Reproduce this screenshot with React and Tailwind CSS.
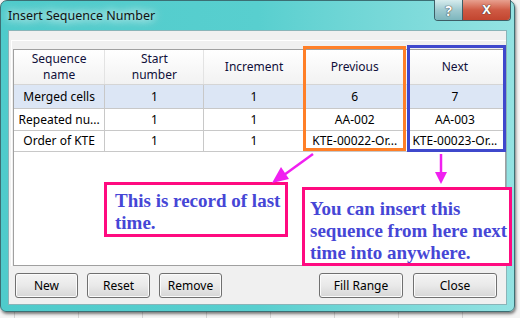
import React from 'react';

const rows = [
  { name: 'Merged cells', start: '1', inc: '1', prev: '6', next: '7', selected: true },
  { name: 'Repeated nu...', start: '1', inc: '1', prev: 'AA-002', next: 'AA-003' },
  { name: 'Order of KTE', start: '1', inc: '1', prev: 'KTE-00022-Or...', next: 'KTE-00023-Or...' },
];

const cols = ['w-[92px]', 'w-[100px]', 'w-[101px]', 'w-[102px]', 'w-[100px]'];
const rowHeights = ['h-[24px]', 'h-[22px]', 'h-[21px]'];

function Btn({ label, w }) {
  return (
    <button
      className={`${w} h-[25px] rounded-[3px] border border-[#707070] bg-gradient-to-b from-[#f4f4f4] via-[#e9e9e9] to-[#d6d6d6] text-[12px] text-black shadow-[inset_0_0_0_1px_#fbfbfb]`}
    >
      {label}
    </button>
  );
}

function Callout({ className, children }) {
  return (
    <div
      className={`absolute border-[3px] border-[#ff0a80] bg-white font-['Liberation_Serif',serif] text-[19px] font-bold leading-[22px] text-[#4646d6] ${className}`}
    >
      {children}
    </div>
  );
}

export default function App() {
  return (
    <div className="relative h-[318px] w-[520px] overflow-hidden bg-[#f4f4f4] font-['Noto_Sans',sans-serif]">
      {/* window */}
      <div className="relative h-[312px] w-[515px] rounded-t-[7px] rounded-b-[6px] border border-[#3c6f74] bg-gradient-to-r from-[#4fcbcb] via-[#58cfcf] to-[#93e2e2] px-[7px] pb-[6px] pt-[29px] shadow-[1px_2px_3px_rgba(0,0,0,0.5)]">
        {/* title */}
        <div className="absolute left-[7px] top-[6px] text-[12.5px] text-[#111] [text-shadow:0_0_8px_#fff,0_0_12px_#fff]">
          Insert Sequence Number
        </div>
        <div className="absolute right-[3px] top-[-1px] flex h-[21px] overflow-hidden rounded-b-[4px] border border-t-0 border-[#3d5e66]">
          <div className="flex w-[28px] items-center justify-center border-r border-[#3d5e66] bg-gradient-to-b from-[#d6ecee] via-[#9fcad0] to-[#7cb6bd] text-[14px] font-bold text-white [text-shadow:0_0_1px_#333,0_0_1px_#333]">
            ?
          </div>
          <div className="flex w-[47px] items-center justify-center bg-gradient-to-b from-[#e7a08f] via-[#cf5a44] to-[#c2452f] text-[13px] font-bold text-white [text-shadow:0_0_1px_#333,0_0_1px_#333]">
            X
          </div>
        </div>

        {/* client area */}
        <div className="flex h-full flex-col border border-[#8ab4b8] bg-[#f0f0f0] pl-[2px] pr-0 pt-[9px]">
          <div className="flex h-[226px] flex-col border-t border-l border-white pl-px pt-[8px]">
            <div className="flex-1 border border-[#a0a0a0] bg-white">
              {/* header */}
              <div className="flex h-[35px] border-b border-[#d5d5d5] bg-gradient-to-b from-white to-[#f2f2f2] text-[12px] leading-[16px] text-[#10103a]">
                {['Sequence name', 'Start number', 'Increment', 'Previous', 'Next'].map((h, i) => (
                  <div
                    key={h}
                    className={`${cols[i]} flex flex-col items-center justify-center border-r border-[#e3e3e3] px-1 text-center`}
                  >
                    {h === 'Sequence name' ? (
                      <>
                        <span>Sequence</span>
                        <span>name</span>
                      </>
                    ) : h === 'Start number' ? (
                      <>
                        <span>Start</span>
                        <span>number</span>
                      </>
                    ) : (
                      <span>{h}</span>
                    )}
                  </div>
                ))}
              </div>
              {rows.map((r, ri) => (
                <div
                  key={r.name}
                  className={`flex ${rowHeights[ri]} border-b border-[#c8c8c8] text-[12px] text-black ${r.selected ? 'bg-[#dce6f5]' : 'bg-white'}`}
                >
                  {[r.name, r.start, r.inc, r.prev, r.next].map((v, i) => (
                    <div
                      key={i}
                      className={`${cols[i]} flex items-center justify-center overflow-hidden whitespace-nowrap border-r border-[#c8c8c8]`}
                    >
                      {v}
                    </div>
                  ))}
                </div>
              ))}
            </div>
          </div>

          {/* buttons */}
          <div className="mt-[7px] flex items-center justify-between pl-[4px] pr-[9px]">
            <div className="flex gap-[9px]">
              <Btn label="New" w="w-[63px]" />
              <Btn label="Reset" w="w-[63px]" />
              <Btn label="Remove" w="w-[63px]" />
            </div>
            <div className="flex gap-[10px]">
              <Btn label="Fill Range" w="w-[84px]" />
              <Btn label="Close" w="w-[84px]" />
            </div>
          </div>
        </div>
      </div>

      {/* excel grid strip below */}
      <div className="flex h-[6px] w-full">
        {[0, 1, 2, 3, 4, 5, 6, 7].map((i) => (
          <div key={i} className="h-full w-[64px] shrink-0 border-r border-[#d4d4d4] first:w-[15px]" />
        ))}
      </div>

      {/* annotation frames */}
      <div className="absolute left-[303px] top-[46px] h-[105px] w-[103px] border-[3px] border-[#ff7f27]" />
      <div className="absolute left-[407px] top-[45px] h-[107px] w-[99px] border-[3px] border-[#3f48cc]" />

      <Callout className="left-[104px] top-[182px] h-[55px] w-[184px] pl-[8px] pt-[5px]">
        This is record of last<br />time.
      </Callout>
      <Callout className="left-[302px] top-[187px] h-[79px] w-[210px] pl-[5px] pt-[8px]">
        You can insert this<br />sequence from here next<br />time into anywhere.
      </Callout>

      {/* arrows */}
      <svg className="pointer-events-none absolute left-0 top-0" width="520" height="318">
        <line x1="313" y1="154" x2="284" y2="175" stroke="#f020f0" strokeWidth="2.5" />
        <polygon points="272,183 289,179 281,167" fill="#f020f0" />
        <line x1="441" y1="154" x2="441" y2="174" stroke="#f020f0" strokeWidth="2.5" />
        <polygon points="441,184 435,172 447,172" fill="#f020f0" />
      </svg>
    </div>
  );
}
